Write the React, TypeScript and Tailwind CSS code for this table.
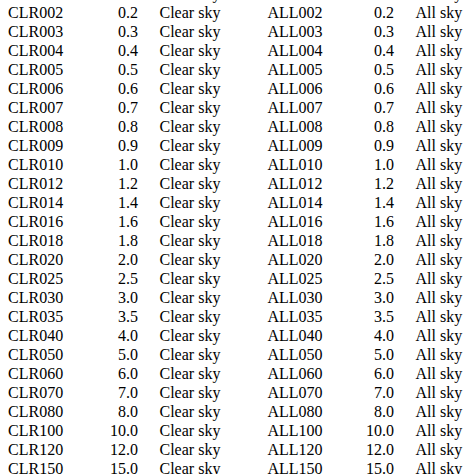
const codes = ["001", "002", "003", "004", "005", "006", "007", "008", "009", "010", "012", "014", "016", "018", "020", "025", "030", "035", "040", "050", "060", "070", "080", "100", "120", "150"];

function Row({ code }: { code: string }) {
  const value = (parseInt(code, 10) / 10).toFixed(1);
  return (
    <div className="grid grid-cols-[70px_60px_129.5px_70px_56.5px_1fr] h-[19px]">
      <div>CLR{code}</div>
      <div className="text-right">{value}</div>
      <div className="pl-[21.5px]">Clear sky</div>
      <div>ALL{code}</div>
      <div className="text-right">{value}</div>
      <div className="pl-[21.5px]">All sky</div>
    </div>
  );
}

export default function App() {
  return (
    <div className="w-[474px] h-[474px] overflow-hidden bg-white text-black">
      <div
        className="mt-[-15.6px] pl-[8px] text-[16px] leading-[19px] whitespace-nowrap"
        style={{ fontFamily: '"Liberation Serif", "Times New Roman", serif' }}
      >
        {codes.map((c) => (
          <Row key={c} code={c} />
        ))}
      </div>
    </div>
  );
}
